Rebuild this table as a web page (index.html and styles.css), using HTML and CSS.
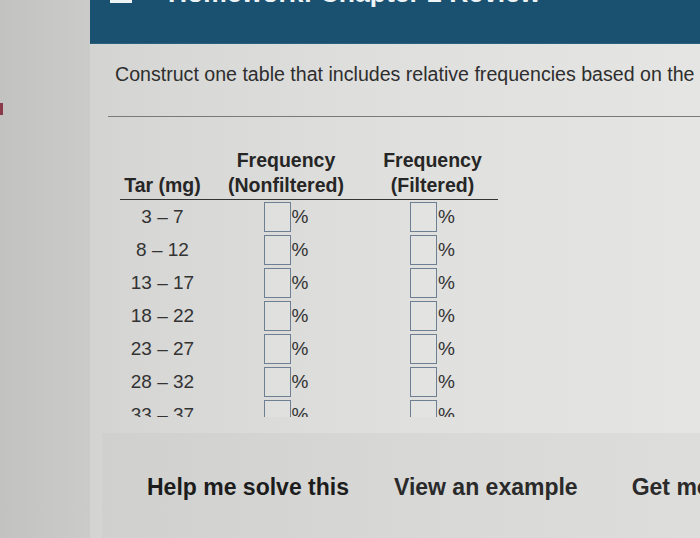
FILE: index.html
```html
<!DOCTYPE html>
<html>
<head>
<meta charset="utf-8">
<link rel="stylesheet" href="styles.css">
</head>
<body>
<div class="screen">
  <div class="rail"><span class="rail-mark"></span></div>
  <div class="main">
    <div class="topbar">
      <div class="topbar-title"><span class="topbar-icon"></span>Homework: Chapter 2 Review</div>
    </div>
    <div class="content">
      <p class="question">Construct one table that includes relative frequencies based on the</p>
      <div class="rule"></div>
      <table class="freq">
        <thead>
          <tr>
            <th class="c-tar">Tar (mg)</th>
            <th class="c-nf">Frequency<br>(Nonfiltered)</th>
            <th class="c-f">Frequency<br>(Filtered)</th>
          </tr>
        </thead>
        <tbody>
          <tr><td>3 – 7</td><td><span class="cell"><span class="box"></span>%</span></td><td><span class="cell"><span class="box"></span>%</span></td></tr>
          <tr><td>8 – 12</td><td><span class="cell"><span class="box"></span>%</span></td><td><span class="cell"><span class="box"></span>%</span></td></tr>
          <tr><td>13 – 17</td><td><span class="cell"><span class="box"></span>%</span></td><td><span class="cell"><span class="box"></span>%</span></td></tr>
          <tr><td>18 – 22</td><td><span class="cell"><span class="box"></span>%</span></td><td><span class="cell"><span class="box"></span>%</span></td></tr>
          <tr><td>23 – 27</td><td><span class="cell"><span class="box"></span>%</span></td><td><span class="cell"><span class="box"></span>%</span></td></tr>
          <tr><td>28 – 32</td><td><span class="cell"><span class="box"></span>%</span></td><td><span class="cell"><span class="box"></span>%</span></td></tr>
          <tr><td>33 – 37</td><td><span class="cell"><span class="box"></span>%</span></td><td><span class="cell"><span class="box"></span>%</span></td></tr>
        </tbody>
      </table>
    </div>
    <div class="helpbar">
      <span class="help-btn strong">Help me solve this</span>
      <span class="help-btn">View an example</span>
      <span class="help-btn more">Get more help</span>
    </div>
  </div>
</div>
</body>
</html>
```
FILE: styles.css
```css
html, body {
  margin: 0;
  padding: 0;
}
body {
  width: 700px;
  height: 538px;
  overflow: hidden;
  font-family: "Liberation Sans", Arial, sans-serif;
  color: #2c2c2c;
}
.screen {
  display: flex;
  width: 700px;
  height: 538px;
  overflow: hidden;
  background: linear-gradient(90deg, #cfcfcd 0%, #d8d8d6 25%, #dfdfdd 55%, #e5e5e3 100%);
}
.rail {
  width: 90px;
  flex: none;
  background: linear-gradient(90deg, #c2c2c0, #cbcbc9);
  display: flex;
  flex-direction: column;
  padding-top: 103px;
  box-sizing: border-box;
}
.rail-mark {
  width: 3px;
  height: 12px;
  background: #8a3a48;
}
.main {
  flex: 1;
  min-width: 0;
  display: flex;
  flex-direction: column;
}
.topbar {
  flex: none;
  height: 43px;
  background: #1a5070;
  overflow: hidden;
  border-bottom: 1px solid #2e5f7a;
}
.topbar-title {
  margin-top: -20px;
  padding-left: 20px;
  font-size: 26.5px;
  font-weight: 700;
  color: #eef3f6;
  line-height: 26px;
  display: flex;
  align-items: center;
  gap: 36px;
  white-space: nowrap;
}
.topbar-icon {
  width: 22px;
  height: 18px;
  margin-top: 2px;
  background: #eef3f6;
}
.content {
  flex: none;
  height: 373px;
  overflow: hidden;
  display: flex;
  flex-direction: column;
  align-items: flex-start;
}
.question {
  margin: 17px 0 0 25px;
  font-size: 19.6px;
  line-height: 26px;
  color: #2e2e2e;
  white-space: nowrap;
}
.rule {
  align-self: stretch;
  flex: none;
  margin: 29px 0 0 18px;
  height: 1px;
  background: #7a7a7a;
}
.freq {
  flex: none;
  margin: 31px 0 0 30px;
  border-collapse: collapse;
  table-layout: fixed;
  width: 378px;
  color: #2e2e2e;
}
.freq th {
  font-weight: 700;
  font-size: 19.5px;
  line-height: 25px;
  padding: 0 0 1px;
  text-align: center;
  vertical-align: bottom;
  border-bottom: 1.5px solid #333;
  color: #262626;
  white-space: nowrap;
}
.freq th.c-tar { width: 85px; }
.freq th.c-nf { width: 162px; }
.freq th.c-f { width: 131px; }
.freq td {
  height: 33px;
  padding: 0;
  text-align: center;
  vertical-align: middle;
  font-size: 19px;
  line-height: 20px;
  white-space: nowrap;
  color: #333;
}
.cell {
  display: inline-flex;
  align-items: center;
  vertical-align: middle;
  gap: 1px;
  font-size: 19px;
  color: #333;
}
.box {
  width: 25px;
  height: 28px;
  border: 1px solid #6f7f93;
  background: rgba(255,255,255,0.12);
}
.helpbar {
  flex: 1;
  margin: 16px 0 0 12px;
  background: linear-gradient(90deg, #d0d0ce, #d9d9d7 60%, #dddddb);
  display: flex;
  align-items: center;
  padding: 4px 0 0 45px;
  gap: 45px;
  white-space: nowrap;
  overflow: hidden;
}
.help-btn {
  font-size: 23px;
  font-weight: 700;
  color: #2a2a2a;
}
.help-btn.strong {
  color: #1c1c1c;
}
.help-btn.more {
  margin-left: 9px;
}
```
